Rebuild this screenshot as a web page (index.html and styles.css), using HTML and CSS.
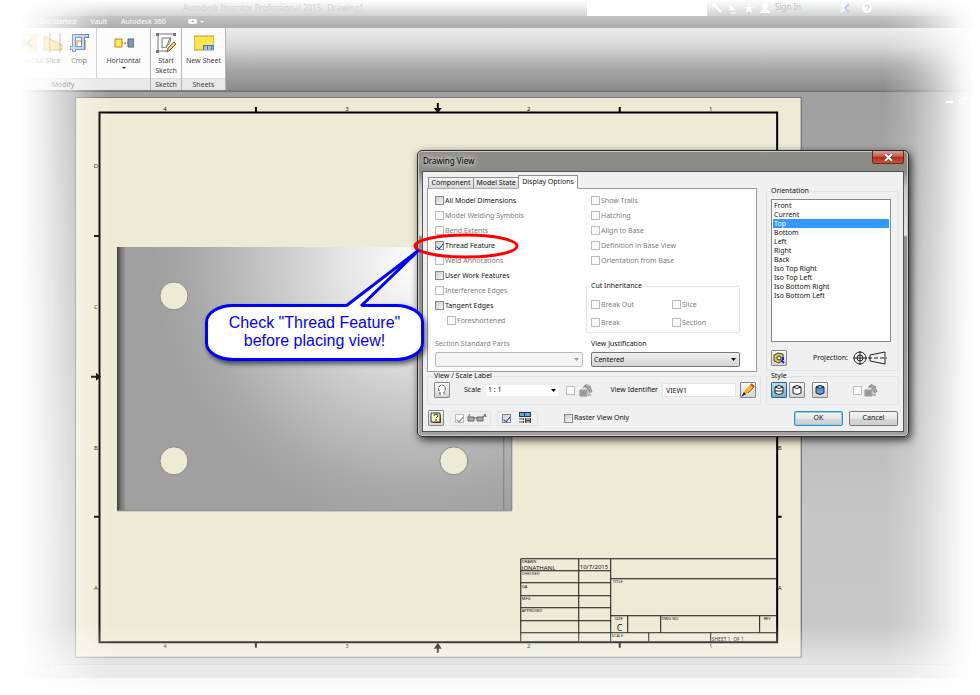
FILE: index.html
```
<!DOCTYPE html>
<html lang="en">
<head>
    <meta charset="UTF-8">
    <meta name="viewport" content="width=device-width, initial-scale=1.0">
    <title>Drawing View</title>
    <link rel="stylesheet" href="styles.css">
</head>
<body>

    <!-- shared icons -->
    <svg class="defs" width="0" height="0" aria-hidden="true">
        <symbol id="i-feed" viewBox="0 0 14 14">
            <path d="M4 4l3-3q5 2 6 8l-3 2-2-5z" fill="#b4b4b4"/>
            <path d="M5 3q5 1 6 7M7 1q5 2 6 8M4 5l3-3M8 6l4-3" fill="none" stroke="#8c8c8c"/>
            <path d="M1 7h7v6H1z" fill="#b8b8b8" stroke="#8c8c8c"/>
            <path d="M2 9h5M2 11h5M9 12h3" stroke="#777"/>
        </symbol>
    </svg>

    <div class="app">
        <header class="title-bar">
            <span class="app-title">Autodesk Inventor Professional 2015 &nbsp; Drawing1</span>
            <input class="search" type="text" aria-label="Search">
            <div class="title-tools">
                <svg width="12" height="12" viewBox="0 0 12 12"><path d="M2 2l3 3 5 5" stroke="#fff" stroke-width="2"/><circle cx="3" cy="3" r="2" fill="#fff"/></svg>
                <svg width="12" height="12" viewBox="0 0 12 12"><path d="M3 3l5 5H3zM7 5l3-3M3 11h6" stroke="#fff" fill="#fff"/></svg>
                <svg width="12" height="12" viewBox="0 0 12 12"><path d="M6 1l1 4h4L8 7l1 4-3-2-3 2 1-4-3-2h4z" fill="#fff"/></svg>
                <svg width="12" height="12" viewBox="0 0 12 12"><circle cx="6" cy="4" r="3" fill="#fff"/><path d="M1 11q1-4 5-4t5 4z" fill="#fff"/></svg>
                <a href="#">Sign In</a>
                <svg class="exchange" width="12" height="12" viewBox="0 0 12 12"><path d="M2 2l4 4-4 4" stroke="#fff" stroke-width="2" fill="none"/><path d="M10 2L6 6l4 4" stroke="#c3cbe6" stroke-width="2" fill="none"/></svg>
                <svg class="help" width="12" height="12" viewBox="0 0 12 12"><circle cx="6" cy="6" r="5" fill="#fff"/><path d="M4 5q0-2 2-2t2 2l-2 2M6 8v1" stroke="#bcc4e0" fill="none"/></svg>
            </div>
        </header>

        <nav class="menu">
            <a href="#">Get Started</a>
            <a href="#">Vault</a>
            <a href="#">Autodesk 360</a>
            <svg width="16" height="6" viewBox="0 0 16 6"><rect width="9" height="5" rx="2" fill="#fff"/><path d="M3 3l2-2 1 2z" fill="#999"/><path d="M12 2h4l-2 2z" fill="#fff"/></svg>
        </nav>

        <div class="ribbon">
            <section class="ribbon-panel modify">
                <div class="tools">
                    <button class="tool">
                        <svg width="20" height="20" viewBox="0 0 20 20"><path d="M1 1h18v18H1z" fill="#fbd83f" stroke="#c9a12b"/><path d="M5 5l5 3 6-3-3 5 3 5-6-3-5 3z" fill="#334"/></svg>
                        Break Out
                    </button>
                    <button class="tool">
                        <svg width="20" height="20" viewBox="0 0 20 20"><path d="M1 3l18 9v5H1z" fill="#fbd83f" stroke="#a98524"/><path d="M7 0v20M17 0v20" stroke="#e33c3c"/></svg>
                        Slice
                    </button>
                    <button class="tool">
                        <svg width="20" height="20" viewBox="0 0 20 20"><path d="M8 8h8v8H8z" fill="#fff" stroke="#d9a43a" stroke-width="2"/><path d="M5 19V3h15M1 15h13V1" fill="none" stroke="#335d9c" stroke-width="4"/><path d="M5 18V3h14M2 15h12V2" fill="none" stroke="#a9c4e8" stroke-width="2"/></svg>
                        Crop
                    </button>
                    <button class="tool horizontal">
                        <svg width="20" height="20" viewBox="0 0 20 20"><path d="M7 10h7" stroke="#444" stroke-dasharray="2 1"/><path d="M1 6h7v8H1z" fill="#fce94c" stroke="#b28e1e"/><path d="M14 6h6v8h-6z" fill="#7f97b3" stroke="#53677e"/></svg>
                        Horizontal
                        <i class="caret"></i>
                    </button>
                </div>
                <h2>Modify</h2>
            </section>
            <section class="ribbon-panel sketch">
                <div class="tools">
                    <button class="tool">
                        <svg width="20" height="20" viewBox="0 0 20 20"><path d="M1 1h18M2 0v20M0 18h11M6 5v10q8-1 9-10zM14 5l-4 10" fill="none" stroke="#777"/><path d="M0 0h3v3H0zM17 0h3v3h-3zM0 17h3v3H0z" fill="#777"/><path d="M11 19l1-4 6-6 2 2-6 6z" fill="#fbc75a" stroke="#8a5a28"/></svg>
                        Start<br>Sketch
                    </button>
                </div>
                <h2>Sketch</h2>
            </section>
            <section class="ribbon-panel sheets">
                <div class="tools">
                    <button class="tool">
                        <svg width="20" height="20" viewBox="0 0 20 20"><path d="M0 3h20v14H0z" fill="#fce44e" stroke="#b8962e"/><path d="M9 12h11v5H9z" fill="#4a78c0"/><path d="M10 14h9M10 16h9" stroke="#fff" stroke-dasharray="3 1"/></svg>
                        New Sheet
                    </button>
                </div>
                <h2>Sheets</h2>
            </section>
        </div>

        <main class="workspace">
            <div class="child-buttons">
                <svg width="34" height="8" viewBox="0 0 34 8"><path d="M0 6h7M26 1l6 6M32 1l-6 6" stroke="#fff" stroke-width="2"/><path d="M14 3h5v4h-5zM16 1h5v4" fill="none" stroke="#fff"/></svg>
            </div>
            <svg class="sheet" viewBox="0 0 727 561">
                <defs>
                    <radialGradient id="metal" gradientUnits="userSpaceOnUse" cx="345" cy="165" r="270">
                        <stop offset="0" stop-color="#fff"/>
                        <stop offset=".3" stop-color="#e4e4e4"/>
                        <stop offset=".6" stop-color="#c2c2c2"/>
                        <stop offset=".85" stop-color="#a8a8a8"/>
                        <stop offset="1" stop-color="#a0a0a0"/>
                    </radialGradient>
                    <linearGradient id="edge">
                        <stop offset="0" stop-color="#3c3c3c"/>
                        <stop offset=".6" stop-color="#808080"/>
                        <stop offset="1" stop-color="#8e8e8e"/>
                    </linearGradient>
                </defs>
                <rect class="paper" width="727" height="561"/>
                <path class="border" d="M24.500 15.500h678v530h-678z"/>
                <path class="tick" d="M181 10v6M545 10v6M181 545v6M545 545v6M19 139h6M19 420h6M702 139h5M702 420h5"/>
                <path class="arrow" d="M362 6h2v5h3l-4 5-4-5h3zM362 556h2v-4h3l-4-6-4 6h3zM16 279h5v-3l5 4-5 4v-3h-5z"/>
                <g class="zone">
                    <text x="90" y="14">4</text><text x="272" y="14">3</text><text x="454" y="14">2</text><text x="636" y="14">1</text>
                    <text x="90" y="551">4</text><text x="272" y="551">3</text><text x="454" y="551">2</text><text x="636" y="551">1</text>
                    <text x="21" y="71">D</text><text x="21" y="212">C</text><text x="21" y="353">B</text><text x="21" y="493">A</text>
                    <text x="705" y="353">B</text><text x="705" y="493">A</text>
                </g>

                <!-- plate -->
                <path d="M42 150h395v264H42z" fill="url(#metal)"/>
                <path d="M42 150h8v264h-8z" fill="url(#edge)"/>
                <path d="M429 150v264M437 150v264" stroke="#808080"/>
                <path d="M42 414h395" stroke="#888"/>
                <g class="hole">
                    <circle cx="99" cy="199" r="14"/>
                    <circle cx="99" cy="364" r="14"/>
                    <circle cx="379" cy="364" r="14"/>
                </g>

                <!-- title block -->
                <path class="block" d="M446 545v-83h257M504 462v83M536 462v83M446 474h90M446 486h90M446 499h90M446 511h90M446 524h90M446 536h257M536 482h167M536 519h167M553 519v17M586 519v17M685 519v17M574 536v9M636 536v9"/>
                <g class="label">
                    <text x="447" y="466">DRAWN</text><text x="447" y="478">CHECKED</text><text x="447" y="491">QA</text>
                    <text x="447" y="503">MFG</text><text x="447" y="515">APPROVED</text><text x="538" y="486">TITLE</text>
                    <text x="540" y="523">SIZE</text><text x="587" y="523">DWG NO</text><text x="689" y="523">REV</text>
                    <text x="537" y="540">SCALE</text>
                </g>
                <text class="sheet-no" x="637" y="544">SHEET 1 &#160;OF 1</text>
                <g class="value">
                    <text x="447" y="473">JONATHANL</text><text x="505" y="472">10/7/2015</text>
                </g>
                <text class="size" x="542" y="534">C</text>
            </svg>
        </main>

        <div class="doc-tabs"><span class="doc-tab">Plate.ipt</span></div>
        <footer class="status-bar"></footer>
        <div class="fade"></div>
    </div>

    <div class="dialog" role="dialog" aria-labelledby="dialog-title">
        <div class="dialog-title">
            <h1 id="dialog-title">Drawing View</h1>
            <button class="close" aria-label="Close">
                <svg width="9" height="7" viewBox="0 0 9 7"><path d="M1 0l7 7M8 0L1 7" stroke="#444" stroke-width="3"/><path d="M1 0l7 7M8 0L1 7" stroke="#fff" stroke-width="2"/></svg>
            </button>
        </div>
        <form class="client">
            <div class="columns">
                <div class="main-col">
                    <div class="tabs">
                        <button type="button" class="tab">Component</button>
                        <button type="button" class="tab">Model State</button>
                        <button type="button" class="tab active">Display Options</button>
                    </div>
                    <div class="panel">
                        <div class="panel-col">
                            <label class="check"><input type="checkbox">All Model Dimensions</label>
                            <label class="check off"><input type="checkbox" disabled>Model Welding Symbols</label>
                            <label class="check off"><input type="checkbox" disabled>Bend Extents</label>
                            <label class="check"><input type="checkbox" checked>Thread Feature</label>
                            <label class="check off"><input type="checkbox" disabled>Weld Annotations</label>
                            <label class="check"><input type="checkbox">User Work Features</label>
                            <label class="check off"><input type="checkbox" disabled>Interference Edges</label>
                            <label class="check"><input type="checkbox">Tangent Edges</label>
                            <label class="check off indent"><input type="checkbox" disabled>Foreshortened</label>
                            <div class="field off">
                                <label for="parts">Section Standard Parts</label>
                                <select id="parts" disabled><option></option></select>
                            </div>
                        </div>
                        <div class="panel-col">
                            <label class="check off"><input type="checkbox" disabled>Show Trails</label>
                            <label class="check off"><input type="checkbox" disabled>Hatching</label>
                            <label class="check off"><input type="checkbox" disabled>Align to Base</label>
                            <label class="check off"><input type="checkbox" disabled>Definition in Base View</label>
                            <label class="check off"><input type="checkbox" disabled>Orientation from Base</label>
                            <fieldset class="inherit">
                                <legend>Cut Inheritance</legend>
                                <label class="check off"><input type="checkbox" disabled>Break Out</label>
                                <label class="check off"><input type="checkbox" disabled>Slice</label>
                                <label class="check off"><input type="checkbox" disabled>Break</label>
                                <label class="check off"><input type="checkbox" disabled>Section</label>
                            </fieldset>
                            <div class="field">
                                <label for="justify">View Justification</label>
                                <select id="justify"><option>Centered</option></select>
                            </div>
                        </div>
                    </div>
                </div>

                <fieldset class="orientation">
                    <legend>Orientation</legend>
                    <select class="list" size="11" aria-label="Orientation">
                        <option>Front</option>
                        <option>Current</option>
                        <option selected>Top</option>
                        <option>Bottom</option>
                        <option>Left</option>
                        <option>Right</option>
                        <option>Back</option>
                        <option>Iso Top Right</option>
                        <option>Iso Top Left</option>
                        <option>Iso Bottom Right</option>
                        <option>Iso Bottom Left</option>
                    </select>
                    <div class="projection">
                        <button type="button" class="icon-btn" aria-label="Change view orientation">
                            <svg width="12" height="12" viewBox="0 0 12 12"><path d="M1 3l4-2 5 1v6l-4 3-5-2z" fill="#cfcf45" stroke="#444"/><circle cx="6" cy="6" r="2" fill="#eee" stroke="#333"/><path d="M8 8l3 3M10 5v3" stroke="#22c" stroke-width="2"/></svg>
                        </button>
                        <span>Projection:</span>
                        <svg width="34" height="14" viewBox="0 0 34 14"><g fill="none" stroke="#222"><circle cx="7" cy="7" r="6"/><circle cx="7" cy="7" r="3"/><path d="M0 7h14M7 0v14M17 4l15-3v12l-15-3z"/><path d="M15 7h19" stroke-dasharray="4 2"/></g></svg>
                    </div>
                </fieldset>

                <fieldset class="scale-group">
                    <legend>View / Scale Label</legend>
                    <button type="button" class="icon-btn" aria-label="Label visibility">
                        <svg width="10" height="12" viewBox="0 0 10 12"><path d="M3 11V8Q1 6 2 3q3-4 6 0 1 3-1 5v3" fill="#fff" stroke="#444" stroke-dasharray="3 1"/></svg>
                    </button>
                    <label for="scale">Scale</label>
                    <select id="scale" class="plain"><option>1 : 1</option></select>
                    <input type="checkbox" disabled aria-label="Scale from base">
                    <svg width="14" height="14"><use href="#i-feed"/></svg>
                    <label class="identifier" for="identifier">View Identifier</label>
                    <input id="identifier" type="text" value="VIEW1">
                    <button type="button" class="icon-btn" aria-label="Edit view label">
                        <svg width="14" height="14" viewBox="0 0 14 14"><path d="M2 12l2-5 6-6 3 3-6 6z" fill="#f8b62d"/><path d="M7 10l6-6" stroke="#9a5a14"/><path d="M10 1l3 3" stroke="#e0401c" stroke-width="2"/><path d="M0 14l3-5 2 2z" fill="#222"/></svg>
                    </button>
                </fieldset>

                <fieldset class="style-group">
                    <legend>Style</legend>
                    <button type="button" class="icon-btn pressed" aria-label="Hidden line">
                        <svg width="12" height="12" viewBox="0 0 12 12"><path d="M2 3v6q4 3 8 0V3q-4-3-8 0z" fill="#fff" stroke="#222"/><path d="M2 3q4 3 8 0M2 7h8" fill="none" stroke="#222"/></svg>
                    </button>
                    <button type="button" class="icon-btn" aria-label="Hidden line removed">
                        <svg width="12" height="12" viewBox="0 0 12 12"><path d="M2 3v6q4 3 8 0V3q-4-3-8 0z" fill="#fff" stroke="#222"/><path d="M2 3q4 3 8 0" fill="none" stroke="#222"/></svg>
                    </button>
                    <button type="button" class="icon-btn shaded" aria-label="Shaded">
                        <svg width="12" height="12" viewBox="0 0 12 12"><path d="M2 3v6q4 3 8 0V3q-4-3-8 0z" fill="#5f9ad2" stroke="#1b2c44"/><path d="M2 3q4 3 8 0-4-3-8 0z" fill="#a6cdf0" stroke="#1b2c44"/></svg>
                    </button>
                    <input type="checkbox" disabled aria-label="Style from base">
                    <svg width="14" height="14"><use href="#i-feed"/></svg>
                </fieldset>
            </div>

            <div class="actions">
                <button type="button" class="icon-btn" aria-label="Help">
                    <svg width="12" height="12" viewBox="0 0 12 12"><path d="M3 3h8v8H3z" fill="#555"/><path d="M1 1h9v9H1z" fill="#ffffb0" stroke="#333"/><path d="M4 4q0-2 2-2t2 2L6 6M6 7v2" fill="none" stroke="#222"/></svg>
                </button>
                <div class="option">
                    <input type="checkbox" checked disabled aria-label="Preview">
                    <svg width="20" height="10" viewBox="0 0 20 10"><path d="M1 4h6v4H1zM10 4h6v4h-6zM7 5h3M1 4l2-3M16 4l2-3 1 3" fill="#aaa" stroke="#666"/></svg>
                </div>
                <div class="option">
                    <input type="checkbox" checked aria-label="View in browser">
                    <svg width="12" height="12" viewBox="0 0 12 12"><path d="M0 0h12v5H0z" fill="#333"/><path d="M1 1h4v3H1zM6 1h5v3H6z" fill="#58aee8"/><path d="M0 6h5v2H0zM0 9h5v2H0zM6 6h6v5H6z" fill="#444"/><path d="M0 7h4M0 10h4M7 7h4M7 10h4" stroke="#fff"/></svg>
                </div>
                <label class="check raster"><input type="checkbox">Raster View Only</label>
                <button type="button" class="btn default">OK</button>
                <button type="button" class="btn">Cancel</button>
            </div>
        </form>
    </div>

    <!-- annotation on top of the dialog -->
    <svg class="ring" width="108" height="28" viewBox="0 0 108 28"><ellipse cx="54" cy="14" rx="51" ry="11" fill="none" stroke="#f00" stroke-width="3"/></svg>
    <div class="callout">
        <p>Check "Thread Feature"<br>before placing view!</p>
        <svg class="pointer" width="78" height="62" viewBox="0 0 78 62"><path d="M2 59L75 2 17 59z" fill="#fff"/><path d="M2 58L75 2 17 58" fill="none" stroke="#00f" stroke-width="3" stroke-linejoin="bevel"/></svg>
    </div>

</body>
</html>
```
FILE: styles.css
```
* {
    margin: 0;
    padding: 0;
    box-sizing: border-box;
}

body {
    font-family: "Noto Sans", "Open Sans", sans-serif;
    font-size: 7px;
    line-height: 10px;
    color: #111;
    background-color: #fff;
}

button,
input,
select {
    font: inherit;
    color: inherit;
}

svg {
    display: block;
    flex: none;
}

a {
    color: inherit;
    text-decoration: none;
}

.defs {
    position: absolute;
}

.app {
    position: relative;
    min-height: 100vh;
    display: flex;
    flex-direction: column;
    overflow: hidden;
}

/* window header */

.title-bar {
    height: 16px;
    display: flex;
    align-items: center;
    padding-left: 183px;
    background: linear-gradient(#fff, #e9ebeb 50%, #d2d2d2);
}

.app-title {
    flex: 1;
    font-size: 8px;
    color: #d0d2d2;
}

.search {
    width: 120px;
    height: 16px;
    border: none;
    background-color: #fff;
}

.title-tools {
    width: 273px;
    display: flex;
    gap: 4px;
    padding-left: 4px;
    font-size: 8px;
    color: #c4c4c4;
}

.exchange {
    margin-left: 34px;
}

.help {
    margin-left: 6px;
}

.menu {
    height: 12px;
    display: flex;
    align-items: center;
    gap: 14px;
    padding-left: 39px;
    background: linear-gradient(#c4c4c4, #adadad);
    color: #fff;
}

.menu svg {
    margin-left: 8px;
}

.ribbon {
    height: 64px;
    display: flex;
    background: linear-gradient(#ededed, #d6d6d6 30%, #a8a8a8 62%, #8d8d8d 97%, #777 98%);
}

.ribbon-panel {
    display: flex;
    flex-direction: column;
    height: 62px;
    border-right: 1px solid #b5b5b5;
    background-color: #fcfcfc;
}

.ribbon-panel h2 {
    height: 12px;
    font-size: 7px;
    line-height: 12px;
    font-weight: normal;
    text-align: center;
    color: #444;
    background-color: #e8e8e8;
    border-top: 1px solid #ddd;
}

.tools {
    flex: 1;
    display: flex;
}

.tool {
    width: 26px;
    display: flex;
    flex-direction: column;
    align-items: center;
    padding-top: 5px;
    border: none;
    background: none;
    color: #444;
    white-space: nowrap;
}

.tool svg {
    margin-bottom: 3px;
}

.modify {
    width: 151px;
    padding-left: 14px;
}

.modify h2 {
    padding-right: 38px;
}

.horizontal {
    width: 54px;
    margin-left: auto;
    border-left: 1px solid #ccc;
}

.caret {
    margin-top: 1px;
    border: 2px solid transparent;
    border-top-color: #222;
}

.sketch {
    width: 31px;
}

.sheets {
    width: 44px;
}

.sketch .tool,
.sheets .tool {
    width: 100%;
}

/* drawing */

.workspace {
    position: relative;
    padding: 5px 18.2% 6px 75px;
    background: linear-gradient(#9f9f9f, #b0b0b0 35%, #c6c6c6 75%, #c8c8c8);
}

.child-buttons {
    position: absolute;
    top: 4px;
    right: 0;
}

.sheet {
    width: 100%;
    height: auto;
}

.sheet text {
    fill: #111;
}

.paper {
    fill: #ececd6;
    stroke: #77778c;
    stroke-width: 2;
}

.border {
    fill: none;
    stroke: #000;
    stroke-width: 2;
}

.tick {
    stroke: #000;
    stroke-width: 2;
}

.arrow {
    fill: #000;
}

.block {
    fill: none;
    stroke: #111;
}

.hole {
    fill: #ececd6;
    stroke: #8b8b80;
}

.zone {
    font-size: 6px;
    text-anchor: middle;
}

.label {
    font-size: 4px;
}

.sheet-no {
    font-size: 5px;
}

.value {
    font-size: 6px;
}

.size {
    font-size: 9px;
}

.doc-tabs {
    height: 14px;
    padding-left: 10px;
    background-color: #d4d4d4;
    border-top: 1px solid #bbb;
}

.doc-tab {
    display: block;
    width: 39px;
    height: 11px;
    padding-right: 7px;
    border: 1px solid #bbb;
    border-radius: 0 0 3px 0;
    text-align: right;
    color: #888;
}

.status-bar {
    flex: 1;
    background: linear-gradient(#f2f2f2, #fff);
}

/* soft white edges of the window */
.fade {
    position: absolute;
    inset: 0;
    pointer-events: none;
    background:
        linear-gradient(to right, #fff 20px, rgba(255, 255, 255, .82) 42px, rgba(255, 255, 255, .45) 72px, rgba(255, 255, 255, .12) 95px, transparent 112px),
        linear-gradient(to left, #fff 5px, rgba(255, 255, 255, .9) 18px, rgba(255, 255, 255, .55) 42px, rgba(255, 255, 255, .18) 70px, transparent 96px),
        linear-gradient(to top, rgba(255, 255, 255, .5) 34px, transparent 70px);
}

/* dialog */

.dialog {
    position: absolute;
    left: 417px;
    top: 150px;
    width: 492px;
    padding: 0 4px 4px;
    border: 1px solid #2c2c2c;
    border-radius: 5px;
    background: linear-gradient(#8e8e88, #8a8a84 20px, #ccc 38px, #e4e4e4 84px, #8e8e8e 86px, #a2a2a2);
    box-shadow: inset 0 0 0 1px #c8c8c8, 2px 3px 8px rgba(0, 0, 0, .75);
}

.dialog-title {
    height: 20px;
    display: flex;
    justify-content: space-between;
}

.dialog h1 {
    padding: 4px 1px;
    font-size: 8px;
    line-height: 12px;
    font-weight: normal;
    color: #000;
    text-shadow: 0 0 4px #ddd, 0 0 7px #ddd, 0 0 10px #ddd;
}

.close {
    width: 32px;
    height: 13px;
    display: flex;
    align-items: center;
    justify-content: center;
    border: 1px solid #632b22;
    border-top: none;
    border-radius: 0 0 3px 3px;
    background: linear-gradient(#d8a198, #c65a48 45%, #ad2b16 50%, #d0523b);
}

.client {
    border: 1px solid #555;
    background-color: #f0f0f0;
    padding: 3px 4px 5px;
}

.columns {
    display: grid;
    grid-template-columns: 334px 133px;
    column-gap: 5px;
}

.tabs {
    position: relative;
    height: 14px;
    display: flex;
    align-items: flex-end;
    padding-left: 1px;
    margin-bottom: -1px;
}

.tab {
    width: 46px;
    height: 12px;
    border: 1px solid #8c8e94;
    border-bottom-color: #aaa;
    margin-right: -1px;
    background: linear-gradient(#f3f3f3, #d8d8d8);
    line-height: 10px;
    white-space: nowrap;
}

.tab.active {
    width: 60px;
    height: 14px;
    border-bottom-color: #fff;
    background: #fff;
}

.panel {
    width: 330px;
    height: 184px;
    display: grid;
    grid-template-columns: 148px 149px;
    column-gap: 8px;
    padding: 4px 7px;
    border: 1px solid #9a9ca2;
    background-color: #fff;
}

.panel-col {
    display: flex;
    flex-direction: column;
}

.check {
    height: 15px;
    display: flex;
    align-items: center;
    gap: 1px;
    white-space: nowrap;
}

.off {
    color: #7c7c7c;
}

.indent {
    margin-left: 12px;
}

input[type="checkbox"] {
    appearance: none;
    flex: none;
    display: block;
    width: 9px;
    height: 9px;
    border: 1px solid #888;
    background: linear-gradient(135deg, #ccc, #f8f8f8);
}

input[type="checkbox"]:disabled {
    border-color: #bbb;
    background: #fafafa;
}

input[type="checkbox"]:checked::before {
    content: "";
    display: block;
    width: 3px;
    height: 6px;
    margin-left: 2px;
    border: solid #1c3ec0;
    border-width: 0 1px 1px 0;
    transform: rotate(40deg);
}

input[type="checkbox"]:disabled:checked::before {
    border-color: #888;
}

.field {
    display: flex;
    flex-direction: column;
    gap: 3px;
    margin-top: auto;
}

select {
    appearance: none;
    height: 15px;
    padding: 0 2px;
    border: 1px solid #777;
    border-radius: 2px;
    background: url("data:image/svg+xml,%3Csvg xmlns='http://www.w3.org/2000/svg' width='5' height='3'%3E%3Cpath d='M0 0h5L2.500 3z'/%3E%3C/svg%3E") no-repeat right 3px center, linear-gradient(#f0f0f0, #d4d4d4);
}

select:disabled {
    border-color: #bbb;
    background: url("data:image/svg+xml,%3Csvg xmlns='http://www.w3.org/2000/svg' width='5' height='3'%3E%3Cpath d='M0 0h5L2.500 3z' fill='%23999'/%3E%3C/svg%3E") no-repeat right 3px center, #f4f4f4;
    opacity: 1;
}

select.plain {
    width: 75px;
    height: 13px;
    margin-right: 2px;
    border-color: #eee;
    background-color: #fff;
    background-image: url("data:image/svg+xml,%3Csvg xmlns='http://www.w3.org/2000/svg' width='5' height='3'%3E%3Cpath d='M0 0h5L2.500 3z'/%3E%3C/svg%3E");
}

fieldset {
    min-width: 0;
    border: 1px solid #dce4ea;
    border-radius: 2px;
}

legend {
    padding: 0 1px;
    margin-left: -1px;
    line-height: 8px;
}

.inherit {
    height: 51px;
    display: grid;
    grid-template-columns: 81px 1fr;
    align-content: start;
    row-gap: 3px;
    margin: 14px 0 0 -5px;
    padding: 7px 4px 0;
}

.orientation {
    margin-top: 12px;
    height: 184px;
    padding: 4px 7px 0 4px;
}

.list {
    display: block;
    width: 100%;
    height: 143px;
    padding: 1px;
    border-color: #888;
    border-radius: 0;
    background: #fff;
    overflow: hidden;
}

.list option {
    height: 9px;
    min-height: 9px;
    padding: 0 1px;
    line-height: 9px;
}

.list option:checked {
    color: #fff;
    background: linear-gradient(#3399ff, #3399ff);
}

.projection {
    display: flex;
    align-items: center;
    margin-top: 8px;
}

.projection span {
    margin: 0 5px 0 auto;
}

.projection > svg {
    margin-right: 4px;
}

.icon-btn {
    flex: none;
    width: 16px;
    height: 16px;
    display: flex;
    align-items: center;
    justify-content: center;
    border: 1px solid #888;
    border-radius: 1px;
    background: linear-gradient(#fafafa, #d4d4d4);
}

.icon-btn.pressed {
    border-color: #2c628b;
    background: linear-gradient(#b8dcf2, #6fb1dc);
}

.scale-group,
.style-group {
    height: 33px;
    display: flex;
    align-items: center;
    padding: 0 4px 4px 6px;
}

.scale-group {
    gap: 4px;
}

.scale-group > label {
    margin-left: 10px;
    white-space: nowrap;
}

.scale-group > .identifier {
    margin-left: auto;
}

.scale-group input[type="text"] {
    width: 74px;
    height: 14px;
    padding: 0 3px;
    border: 1px solid #e4e4e4;
    background-color: #fff;
}

.style-group {
    gap: 2px;
    padding-left: 4px;
}

.style-group .shaded {
    margin-left: 5px;
}

.style-group input {
    margin-left: auto;
}

.style-group > svg {
    margin-right: 16px;
}

.actions {
    display: flex;
    align-items: center;
    gap: 6px;
    margin: 5px 1px 0;
}

.option {
    width: 41px;
    height: 15px;
    display: flex;
    align-items: center;
    gap: 8px;
    padding-left: 4px;
    border: 1px solid #dfe6ea;
    border-radius: 2px;
}

.option:first-of-type {
    gap: 3px;
}

.raster {
    margin: 0 auto 0 20px;
}

.btn {
    width: 49px;
    height: 15px;
    border: 1px solid #777;
    border-radius: 2px;
    background: linear-gradient(#f4f4f4, #e6e6e6 50%, #d6d6d6 50%, #cfcfcf);
}

.btn.default {
    border-color: #2b8fbf;
    box-shadow: inset 0 0 0 1px #8fd4ee;
}

/* annotation */

.ring {
    position: absolute;
    left: 412px;
    top: 232px;
}

.callout {
    position: absolute;
    left: 205px;
    top: 304px;
    width: 219px;
    padding: 7px 0 8px;
    border: 3px solid #00f;
    border-radius: 28px / 18px;
    background-color: #fff;
    box-shadow: 2px 3px 5px rgba(0, 0, 0, .6);
    font-family: "Liberation Sans", Arial, sans-serif;
    font-size: 16px;
    line-height: 18px;
    text-align: center;
    color: #00f;
}

.pointer {
    position: absolute;
    left: 136px;
    top: -59px;
}
```
